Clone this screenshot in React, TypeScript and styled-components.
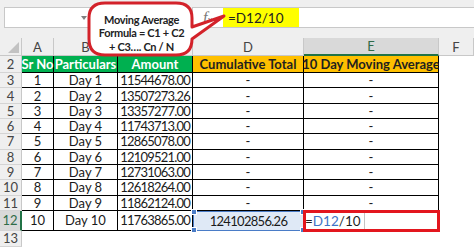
import * as React from "react";
import styled, { createGlobalStyle } from "styled-components";

const GlobalStyle = createGlobalStyle`
  html, body {
    margin: 0;
    padding: 0;
    background: #ffffff;
  }
  body {
    font-family: "Lato", "Open Sans", "Liberation Sans", sans-serif;
  }
`;

const Frame = styled.div`
  position: relative;
  width: 474px;
  height: 247px;
  overflow: hidden;
  background: #ffffff;
`;

const FormulaBar = styled.div`
  display: flex;
  align-items: flex-start;
  box-sizing: border-box;
  height: 38px;
  padding: 7px 0 0 4px;
  background: #efefef;
`;

const NameBox = styled.div`
  display: flex;
  align-items: center;
  justify-content: flex-end;
  box-sizing: border-box;
  width: 88px;
  height: 21px;
  padding-right: 4px;
  background: #ffffff;
  border: 1px solid #c8c8c8;
`;

const Caret = styled.span`
  width: 0;
  height: 0;
  border-left: 3px solid transparent;
  border-right: 3px solid transparent;
  border-top: 4px solid #808080;
`;

const Gap = styled.div`
  width: 100px;
`;

const FxBox = styled.div`
  display: flex;
  align-items: center;
  justify-content: flex-end;
  box-sizing: border-box;
  width: 31px;
  height: 21px;
  padding-right: 11px;
  background: #ffffff;
  border: 1px solid #c8c8c8;
  border-right: none;
  color: #7a7a7a;
  font-family: "Liberation Serif", serif;
  font-style: italic;
  font-size: 16px;
  line-height: 1;
`;

const FxSub = styled.span`
  font-size: 10px;
  margin-top: 5px;
`;

const FormulaInput = styled.div`
  flex: 1;
  display: flex;
  box-sizing: border-box;
  height: 21px;
  background: #ffffff;
  border-top: 1px solid #c8c8c8;
  border-bottom: 1px solid #c8c8c8;
`;

const FormulaText = styled.div`
  box-sizing: border-box;
  width: 76px;
  height: 100%;
  padding-left: 5px;
  background: #ffff00;
  color: #222222;
  font-size: 13.5px;
  line-height: 20px;
`;

const Sheet = styled.div`
  display: grid;
  grid-template-columns: 22px 32px 64px 75px 111px 135px 1fr;
  grid-template-rows: 18px 17px repeat(9, 15.33px) 20px 16px;
  font-size: 13px;
  color: #1a1a1a;
`;

const Corner = styled.div`
  position: relative;
  background: #efefef;
  border-right: 1px solid #c8c8c8;
  border-bottom: 1px solid #c8c8c8;

  &::after {
    content: "";
    position: absolute;
    right: 2px;
    bottom: 2px;
    width: 0;
    height: 0;
    border-left: 11px solid transparent;
    border-bottom: 11px solid #c2c2c2;
  }
`;

const ColHead = styled.div<{ $active?: boolean }>`
  display: flex;
  align-items: center;
  justify-content: center;
  box-sizing: border-box;
  background: ${(p) => (p.$active ? "#d9d9d9" : "#efefef")};
  border-right: 1px solid #c8c8c8;
  border-bottom: ${(p) => (p.$active ? "2px solid #217346" : "1px solid #c8c8c8")};
  color: ${(p) => (p.$active ? "#2f6b48" : "#444444")};
  font-size: 13px;
`;

const RowHead = styled.div<{ $active?: boolean }>`
  display: flex;
  align-items: center;
  justify-content: center;
  box-sizing: border-box;
  background: ${(p) => (p.$active ? "#d9d9d9" : "#efefef")};
  border-right: ${(p) => (p.$active ? "2px solid #217346" : "1px solid #c8c8c8")};
  border-bottom: 1px solid #d4d4d4;
  color: ${(p) => (p.$active ? "#2f6b48" : "#444444")};
  font-size: 13px;
`;

const HeadCell = styled.div<{ $tone: "green" | "orange" }>`
  display: flex;
  align-items: center;
  justify-content: center;
  box-sizing: border-box;
  white-space: nowrap;
  background: ${(p) => (p.$tone === "green" ? "#00b050" : "#ffc000")};
  color: ${(p) => (p.$tone === "green" ? "#ffffff" : "#1f1f1f")};
  border-right: 1px solid #000000;
  border-bottom: 1px solid #000000;
  font-weight: 700;
  font-size: 13px;
`;

const Cell = styled.div<{ $align?: "center" | "right" }>`
  display: flex;
  align-items: center;
  justify-content: ${(p) => (p.$align === "right" ? "flex-end" : "center")};
  box-sizing: border-box;
  padding-right: ${(p) => (p.$align === "right" ? "2px" : "0")};
  letter-spacing: ${(p) => (p.$align === "right" ? "-0.8px" : "0")};
  white-space: nowrap;
  background: #ffffff;
  border-right: 1px solid #000000;
  border-bottom: 1px solid #000000;
`;

const Blank = styled.div`
  background: #ffffff;
`;

const RefCell = styled(Cell)`
  position: relative;
  letter-spacing: -0.7px;
  background: #dfe9f6;
  border: 1.5px solid #4a7cc7;
`;

const Handle = styled.span<{ $x: "left" | "right"; $y: "top" | "bottom" }>`
  position: absolute;
  ${(p) => p.$x}: -3px;
  ${(p) => p.$y}: -3px;
  width: 4px;
  height: 4px;
  background: #4a7cc7;
  border: 0.5px solid #ffffff;
`;

const EditCell = styled.div`
  display: flex;
  align-items: center;
  box-sizing: border-box;
  padding-left: 1px;
  background: #ffffff;
  outline: 3px solid #e3161e;
  outline-offset: -2px;
  font-size: 13.5px;
  color: #1f1f1f;
  z-index: 1;
`;

const EditText = styled.span`
  padding-right: 3px;
  line-height: 16px;
  border-right: 1px solid #c4c4c4;
`;

const RefText = styled.span`
  color: #3f74c6;
`;

const Callout = styled.div`
  position: absolute;
  left: 86px;
  top: 0;
  width: 142px;
  height: 58px;
`;

const CalloutShape = styled.svg`
  position: absolute;
  left: 0;
  top: 0;
`;

const CalloutText = styled.div`
  position: absolute;
  left: 3px;
  top: 12px;
  width: 105px;
  height: 42px;
  display: flex;
  flex-direction: column;
  align-items: center;
  justify-content: center;
  color: #222222;
  font-weight: 700;
  font-size: 11px;
  letter-spacing: -0.3px;
  line-height: 13.5px;
  white-space: nowrap;
`;

const amounts = [
  "11544678.00",
  "13507273.26",
  "13357277.00",
  "11743713.00",
  "12865078.00",
  "12109521.00",
  "12731063.00",
  "12618264.00",
  "11862124.00",
];

const App = () => {
  return (
    <Frame>
      <GlobalStyle />
      <FormulaBar>
        <NameBox>
          <Caret />
        </NameBox>
        <Gap />
        <FxBox>
          f<FxSub>x</FxSub>
        </FxBox>
        <FormulaInput>
          <FormulaText>=D12/10</FormulaText>
        </FormulaInput>
      </FormulaBar>

      <Sheet>
        <Corner />
        <ColHead>A</ColHead>
        <ColHead>B</ColHead>
        <ColHead>C</ColHead>
        <ColHead>D</ColHead>
        <ColHead $active>E</ColHead>
        <ColHead>F</ColHead>

        <RowHead>2</RowHead>
        <HeadCell $tone="green">Sr No</HeadCell>
        <HeadCell $tone="green">Particulars</HeadCell>
        <HeadCell $tone="green">Amount</HeadCell>
        <HeadCell $tone="orange">Cumulative Total</HeadCell>
        <HeadCell $tone="orange">10 Day Moving Average</HeadCell>
        <Blank />

        {amounts.map((amount, i) => (
          <React.Fragment key={amount}>
            <RowHead>{i + 3}</RowHead>
            <Cell>{i + 1}</Cell>
            <Cell>Day {i + 1}</Cell>
            <Cell $align="right">{amount}</Cell>
            <Cell>-</Cell>
            <Cell>-</Cell>
            <Blank />
          </React.Fragment>
        ))}

        <RowHead $active>12</RowHead>
        <Cell>10</Cell>
        <Cell>Day 10</Cell>
        <Cell $align="right">11763865.00</Cell>
        <RefCell>
          124102856.26
          <Handle $x="left" $y="top" />
          <Handle $x="left" $y="bottom" />
          <Handle $x="right" $y="top" />
          <Handle $x="right" $y="bottom" />
        </RefCell>
        <EditCell>
          <EditText>
            =<RefText>D12</RefText>/10
          </EditText>
        </EditCell>
        <Blank />

        <RowHead>13</RowHead>
      </Sheet>

      <Callout>
        <CalloutShape width="142" height="58" viewBox="0 0 142 58">
          <path
            d="M19 3 H90 Q106 3 106 18 V27 L138 16 L106 39 Q106 55 90 55 H19 Q3 55 3 39 V18 Q3 3 19 3 Z"
            fill="#ffffff"
            stroke="#d3222a"
            strokeWidth="3"
            strokeLinejoin="round"
          />
        </CalloutShape>
        <CalloutText>
          <span>Moving Average</span>
          <span>Formula = C1 + C2</span>
          <span>+ C3…. Cn / N</span>
        </CalloutText>
      </Callout>
    </Frame>
  );
};

export default App;
